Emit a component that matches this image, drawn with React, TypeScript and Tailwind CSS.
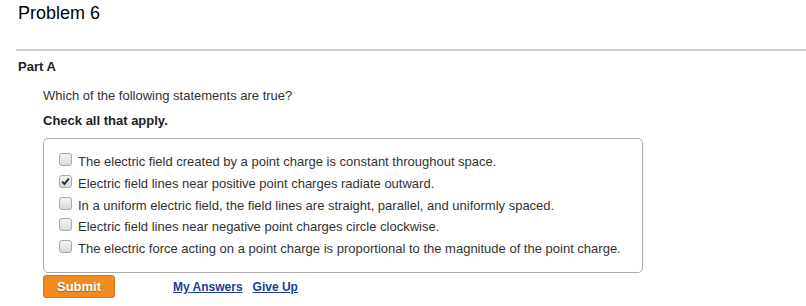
import { useState } from "react";

const OPTIONS = [
  "The electric field created by a point charge is constant throughout space.",
  "Electric field lines near positive point charges radiate outward.",
  "In a uniform electric field, the field lines are straight, parallel, and uniformly spaced.",
  "Electric field lines near negative point charges circle clockwise.",
  "The electric force acting on a point charge is proportional to the magnitude of the point charge.",
];

function Box({ checked }: { checked: boolean }) {
  return (
    <span className="mt-[2px] flex h-[13px] w-[13px] shrink-0 items-center justify-center rounded-[3px] border border-[#a9a9a9] bg-gradient-to-b from-[#f4f4f4] to-[#d9d9d9]">
      {checked && (
        <svg width="9" height="9" viewBox="0 0 9 9" aria-hidden>
          <path d="M1.2 4.6 L3.4 7 L7.8 1.6" fill="none" stroke="#2a2a2a" strokeWidth="1.9" />
        </svg>
      )}
    </span>
  );
}

export default function App() {
  const [picked, setPicked] = useState<number[]>([1]);

  const toggle = (i: number) =>
    setPicked((p) => (p.includes(i) ? p.filter((x) => x !== i) : [...p, i]));

  return (
    <div className="h-[306px] w-[806px] overflow-hidden bg-white font-['Liberation_Sans',Arial,sans-serif] text-[#333]">
      <h1 className="pl-[18px] pt-[2px] text-[18px] leading-[22px] text-black">Problem 6</h1>
      <div className="ml-[16px] mt-[25px] h-[2px] bg-[#cccccc]" />

      <div className="pl-[18px]">
        <h2 className="mt-[8px] text-[13px] font-bold leading-[16px] text-[#222]">Part A</h2>

        <div className="pl-[25px]">
          <p className="mt-[13px] text-[13px] leading-[16px]">Which of the following statements are true?</p>
          <p className="mt-[9px] text-[13px] font-bold leading-[16px] text-[#222]">Check all that apply.</p>

          <div className="mt-[9px] w-[600px] rounded-[5px] border border-[#ababab] pb-[12px] pl-[15px] pt-[12px]">
            {OPTIONS.map((text, i) => (
              <label
                key={i}
                className="flex cursor-pointer items-start gap-[6px] text-[13px] leading-[21.75px]"
                onClick={() => toggle(i)}
              >
                <Box checked={picked.includes(i)} />
                <span>{text}</span>
              </label>
            ))}
          </div>

          <div className="mt-[2px] flex items-center">
            <button
              type="button"
              className="h-[23px] w-[72px] rounded-[3px] border border-[#d2771a] bg-[#f08b1f] text-[13px] font-bold text-white [text-shadow:0_1px_1px_rgba(0,0,0,0.35)]"
            >
              Submit
            </button>
            <a href="#" className="ml-[58px] mt-[1px] text-[12px] font-bold text-[#1d3a9a] underline">
              My Answers
            </a>
            <a href="#" className="ml-[10px] mt-[1px] text-[12px] font-bold text-[#1d3a9a] underline">
              Give Up
            </a>
          </div>
        </div>
      </div>
    </div>
  );
}
